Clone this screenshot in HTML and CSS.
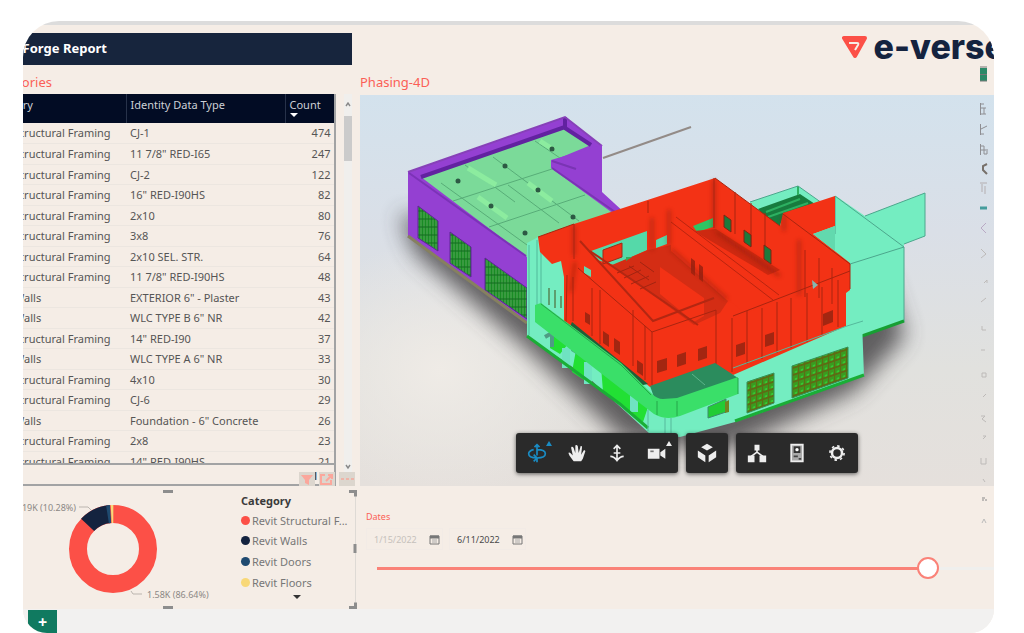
FILE: index.html
```html
<!DOCTYPE html>
<html lang="en">
<head>
  <meta charset="UTF-8" />
  <title>Forge Report</title>
  <link rel="stylesheet" href="styles.css">
</head>
<body>
  <main class="report">
    <div class="columns">
      <section class="left">
        <header class="banner"><h1>Forge Report</h1></header>
        <h2 class="title title-cut"><span>Categories</span></h2>

        <div class="table-area">
          <div class="table-box">
            <div class="table-clip">
              <table>
                <thead>
                  <tr><th class="cat">Category</th><th class="type">Identity Data Type</th><th class="count">Count<i></i></th></tr>
                </thead>
                <tbody>
                  <tr><td>Revit Structural Framing</td><td>CJ-1</td><td>474</td></tr>
                  <tr><td>Revit Structural Framing</td><td>11 7/8" RED-I65</td><td>247</td></tr>
                  <tr><td>Revit Structural Framing</td><td>CJ-2</td><td>122</td></tr>
                  <tr><td>Revit Structural Framing</td><td>16" RED-I90HS</td><td>82</td></tr>
                  <tr><td>Revit Structural Framing</td><td>2x10</td><td>80</td></tr>
                  <tr><td>Revit Structural Framing</td><td>3x8</td><td>76</td></tr>
                  <tr><td>Revit Structural Framing</td><td>2x10 SEL. STR.</td><td>64</td></tr>
                  <tr><td>Revit Structural Framing</td><td>11 7/8" RED-I90HS</td><td>48</td></tr>
                  <tr><td>Revit Walls</td><td>EXTERIOR 6" - Plaster</td><td>43</td></tr>
                  <tr><td>Revit Walls</td><td>WLC TYPE B 6" NR</td><td>42</td></tr>
                  <tr><td>Revit Structural Framing</td><td>14" RED-I90</td><td>37</td></tr>
                  <tr><td>Revit Walls</td><td>WLC TYPE A 6" NR</td><td>33</td></tr>
                  <tr><td>Revit Structural Framing</td><td>4x10</td><td>30</td></tr>
                  <tr><td>Revit Structural Framing</td><td>CJ-6</td><td>29</td></tr>
                  <tr><td>Revit Walls</td><td>Foundation - 6" Concrete</td><td>26</td></tr>
                  <tr><td>Revit Structural Framing</td><td>2x8</td><td>23</td></tr>
                  <tr><td>Revit Structural Framing</td><td>14" RED-I90HS</td><td>21</td></tr>
                </tbody>
              </table>
            </div>
            <div class="total">1</div>
          </div>
          <div class="scrollbar">
            <svg width="8" height="22" viewBox="0 0 8 22"><path d="M2 12l2-3 2 3" fill="none" stroke="#888" stroke-width="1.4"/></svg>
            <span class="thumb"></span>
            <svg width="8" height="14" viewBox="0 0 8 14"><path d="M2 5l2 3 2-3" fill="none" stroke="#888" stroke-width="1.4"/></svg>
          </div>
          <!-- visual header: filter, focus, more -->
          <svg class="visual-tools" width="58" height="15" viewBox="0 0 58 15">
            <g fill="#dcd6ce"><rect width="16" height="14"/><rect x="20" width="16" height="14"/><rect x="40" width="16" height="14"/></g>
            <path d="M2 3h12l-4 5v5l-4-2V8z" fill="#fba79c"/>
            <path d="M26 3h-4v9h10V8M27 9l6-6M29 3h4v4" fill="none" stroke="#fba79c" stroke-width="2"/>
            <path d="M42 7h3M47 7h3M52 7h3" stroke="#eeb4a8" stroke-width="2"/>
          </svg>
        </div>

        <div class="chart">
          <svg class="donut" width="218" height="118" viewBox="23 490 218 118">
            <g fill="none" stroke-width="18">
              <circle cx="113" cy="549" r="35" stroke="#fc5047"/>
              <path d="M87.600 524.920A35 35 0 0 1 109.900 514.140" stroke="#14233f"/>
              <path d="M107.500 514.430A35 35 0 0 1 110.560 514.090" stroke="#1f4a70"/>
              <path d="M111.200 514.050A35 35 0 0 1 113.300 514" stroke="#f8d878"/>
            </g>
            <path d="M79 507h9l3 3M131 591l2 3h9" fill="none" stroke="#bbb5af"/>
            <text x="76" y="511" text-anchor="end">0.19K (10.28%)</text>
            <text x="147" y="598">1.58K (86.64%)</text>
          </svg>
          <div class="legend">
            <h3>Category</h3>
            <ul>
              <li class="framing">Revit Structural F...</li>
              <li class="walls">Revit Walls</li>
              <li class="doors">Revit Doors</li>
              <li class="floors">Revit Floors</li>
            </ul>
            <i class="more"></i>
          </div>
          <!-- resize handles -->
          <svg class="handles" width="334" height="119" viewBox="23 490 334 119">
            <path d="M355.500 492v116" stroke="#dedad5"/>
            <g fill="none" stroke="#8d8d8d" stroke-width="3">
              <path d="M163 491.500h10M163 607.500h10M349 491.500h6.500v5M349 607.500h6.500v-5M355 544v9"/>
            </g>
          </svg>
        </div>
      </section>

      <section class="right">
        <div class="brand">
          <svg width="26" height="24" viewBox="0 0 26 24">
            <path d="M2 3h21l-10 18z" fill="#fc5047" stroke="#fc5047" stroke-width="4" stroke-linejoin="round"/>
            <path d="M7 8h8q2 0 1 2l-3 5" fill="none" stroke="#f5ede6" stroke-width="2"/>
            <path d="M12 10l-2 5-3-5z" fill="#fc5047"/>
          </svg>
          <span>e-verse</span>
        </div>
        <h2 class="title">Phasing-4D</h2>

        <div class="viewer">
          <svg class="scene" viewBox="360 95 634 391" preserveAspectRatio="xMidYMid slice">
            <defs>
              <linearGradient id="sky" x1="0" y1="0" x2="0" y2="1">
                <stop offset="0" stop-color="#d3e2ed"/>
                <stop offset=".35" stop-color="#dadfe7"/>
                <stop offset=".7" stop-color="#e1e1de"/>
                <stop offset="1" stop-color="#e5e0dc"/>
              </linearGradient>
              <radialGradient id="glow">
                <stop offset="0" stop-color="#efebe6"/>
                <stop offset="1" stop-color="#efebe6" stop-opacity="0"/>
              </radialGradient>
              <filter id="soft" x="-20%" y="-20%" width="140%" height="140%"><feGaussianBlur stdDeviation="11"/></filter>
              <filter id="shade" x="-20%" y="-20%" width="140%" height="140%"><feGaussianBlur stdDeviation="2"/></filter>
              <pattern id="panes" width="6" height="8" patternUnits="userSpaceOnUse">
                <rect width="6" height="8" fill="#198c24"/>
                <path d="M1 0v8M4 0v8" stroke="#58a85c"/>
                <path d="M0 3h6" stroke="#136a20"/>
              </pattern>
              <pattern id="louvres" width="6" height="7" patternUnits="userSpaceOnUse" patternTransform="skewY(-19)">
                <rect width="6" height="7" fill="#3b9a1f"/>
                <path d="M0 0v7M0 4h6" stroke="#5e6b14" stroke-width="2"/>
                <rect x="3" y="1" width="2" height="2" fill="#35d135"/>
              </pattern>
            </defs>

            <rect x="360" y="95" width="634" height="391" fill="url(#sky)"/>
            <ellipse cx="440" cy="370" rx="150" ry="130" fill="url(#glow)"/>
            <path d="M400 215l15 38 105 90 105 98 100 10 130-60 50-55-20-60z" fill="#48464a" opacity=".85" filter="url(#soft)"/>

            <!-- site boundary line -->
            <path d="M603 158l88-31" stroke="#938b87" stroke-width="2"/>

            <!-- purple wing -->
            <path d="M408 172l157-55 37 29v46l24 22-86 31-13 13v65l-119-87z" fill="#9440d2"/>
            <path d="M421 177l144-50 26 18-39 16v7l68 47-80 25-13 17z" fill="#7bda99"/>
            <path d="M421 177l144-50M565 117v11M565 128l26 17" fill="none" stroke="#6222a0" stroke-width="4"/>
            <path d="M408 172l157-55 37 29" fill="none" stroke="#8741b8" stroke-width="2"/>
            <path d="M551 160l51-15v50l20 16-8 3-63-46z" fill="#9440d2"/>
            <path d="M552 168l66 46M552 161l24 8" stroke="#7a34b4" stroke-width="2"/>
            <g stroke="#58ad78">
              <path d="M453 201l99-32M489 227l96-32M441 183l86 62M493 157l86 64M535 141l25 17M465 165l50 37M508 185l51 38"/>
            </g>
            <g stroke="#8cec9f" stroke-width="5"><path d="M468 168l28 17M478 197l29 21M528 183l24 18M540 141l14 9"/></g>
            <g fill="#2d5944">
              <circle cx="458" cy="181" r="2.500"/><circle cx="505" cy="166" r="2.500"/><circle cx="552" cy="149" r="2.500"/>
              <circle cx="491" cy="206" r="2.500"/><circle cx="538" cy="190" r="2.500"/><circle cx="573" cy="217" r="2.500"/><circle cx="525" cy="233" r="2.500"/>
            </g>
            <path d="M409 173l117 83" stroke="#7c32b8" stroke-width="2"/>
            <g fill="url(#panes)" stroke="#5e2596">
              <path d="M418 206l20 15v30l-20-13zM450 232l21 15v30l-21-14zM485 258l42 30v31l-42-29z"/>
            </g>
            <path d="M408 236l119 87" stroke="#86805f" stroke-width="3"/>

            <!-- teal rear block -->
            <path d="M750 202l48-16 28 20 10-10 29 20 60-23v43l-21 8v78l-43 14-90-60z" fill="#74edc1"/>
            <path d="M758 209l42-15 18 12-35 12-5 12z" fill="#177c3e"/>
            <path d="M766 212l34-13M768 217l40-14M798 186v9" stroke="#2db061" stroke-width="2"/>
            <g fill="none" stroke="#4ca68c">
              <path d="M835 196l69 51-54 17M865 216l60-23v43l-21 8M904 247v75M750 202l48-16 24 17M835 196v38"/>
            </g>
            <path d="M904 321l-42 15" stroke="#179f33" stroke-width="3"/>
            <path d="M855 290v30" stroke="#3fa688" stroke-width="6" filter="url(#shade)"/>

            <!-- teal main body -->
            <path d="M527 243l13-7 40 5 145 135 121-51 16-4 2 55-129 46-55 15-30-3-60-55-63-43z" fill="#74edc1"/>
            <path d="M537 240v68M541 243v66M529 245v90" stroke="#50b99a"/>
            <path d="M549 288v17M555 290v18M561 296v12" stroke="#5d9f70" stroke-width="2"/>

            <!-- red upper storey -->
            <path d="M538 237l36-13 141-46 65 48 3-13 52-17v30l-22 8 37 29v27l-4 3v33l-113 49-17-11-66 23-51-42-26-18h-9v-50l-3-16-9 3-12-12z" fill="#f33215"/>
            <path d="M591 251l56-20v19l-33 15-17-5zM656 240l11-5v9l-11 4z" fill="#55d9a9"/>
            <path d="M693 226l20-8v9l-16 5z" fill="#2fc464"/>
            <path d="M603 250l19-7v14l-19 7z" fill="#f33215" stroke="#9f2a18"/>
            <path d="M813 234l22-8v25zM584 266l7 4v7l-7-4z" fill="#62d9ae"/>
            <path d="M612 265l36-15 23-5v6l57 50-8 12-26 12-58-42z" fill="#d42d14"/>
            <path d="M632 257l-6 4v-4z" fill="#2fae5c"/>
            <path d="M694 231l22-2 64 41-12 5z" fill="#cd2911"/>
            <path d="M671 217l8 1 100 80-34 16-74-67z" fill="#f33215"/>
            <path d="M671 222l102 78M676 217l103 78" stroke="#b92510"/>
            <path d="M660 267l44 31v18l-10 6-34-28z" fill="#f33215"/>
            <path d="M691 258l4 3v15l-4-3zM699 264l4 3v15l-4-3z" fill="#a82411"/>
            <g fill="none" stroke="#7d1e10" stroke-width="3" opacity=".5" filter="url(#shade)">
              <path d="M714 180v49M652 218v32M669 210v36M716 232l64 44M574 226v30M784 215v16M799 240v55M671 249l56 50M575 262l-4 30"/>
            </g>
            <path d="M580 241l73 80 61-23" fill="none" stroke="#b32712" stroke-width="2"/>
            <path d="M590 251l108 74" stroke="#b32712" stroke-width="2"/>
            <path d="M617 273l17-7M624 278l17-8M631 284l18-8M640 289l16-7M629 266l20 14M640 262l14 10" stroke="#a32411"/>
            <g fill="none" stroke="#a92510">
              <path d="M574 224v35M538 237l36-13M648 201v12M715 178l65 48M714 178v50M751 203v43M765 213v41M735 192v42M783 214l67 50v25M805 250v47M819 258v40M832 268v36"/>
              <path d="M652 332l64-22M733 316l117-45M716 310v54M732 318v54M747 311v53M762 308v51M777 302v51M791 298v50M807 293v49M822 287v48M838 280v47M652 332v53M645 326v54M633 310v56M600 290v54M592 288v48M567 275l-1 47M573 277v44M578 268l74 64"/>
            </g>
            <g fill="#a32611">
              <path d="M657 361l10-3v12l-10 3zM677 355l9-3v12l-9 3zM698 349l9-3v12l-9 3zM736 345l9-3v12l-9 3zM765 335l9-3v12l-9 3zM823 314l10-4v12l-10 4zM603 331l6 4v12l-6-4zM614 338l6 4v13l-6-4zM585 312l5 3v10l-5-3zM637 360l6 4v12l-6-4z"/>
            </g>
            <path d="M724 215l7 5v12l-7-5zM744 230l7 5v12l-7-5zM764 245l7 5v14l-7-5z" fill="#1c7a3c" stroke="#7f2513"/>
            <path d="M812 280l6 5-5 4z" fill="#83b6b0"/>

            <!-- entrance canopy -->
            <path d="M572 322l76 62-10 2-70-54z" fill="#1f5f38"/>
            <path d="M650 386l65-23 23 15-61 24-22-2z" fill="#2b8c5d"/>
            <path d="M692 374l13 11" stroke="#5db48a"/>
            <path d="M550 332l18 12-8 10-10-6zM576 350l17 11-9 19-12-8zM601 366l48 38-6 18-40-30z" fill="#22e034"/>
            <path d="M545 337l7-4v14M572 349l16 10M601 366l14 10" fill="none" stroke="#4f9c84" stroke-width="4"/>
            <path d="M566 348v20M588 362v22M634 388v24" stroke="#6fe3c1" stroke-width="8"/>
            <path d="M535 305l6-2 80 60 30 30q6 6 12 6l14-1 61-21v17l-58 22q-14 5-26-2l-34-26-85-66z" fill="#3adf69"/>
            <path d="M541 304l80 61 30 30M657 401v14M677 401v15M738 378v16" fill="none" stroke="#25a64b"/>
            <path d="M708 407l18-8v13l-18 6z" fill="#22cc35" stroke="#3d8d6d"/>
            <path d="M725 402l4-2v12l-4 1z" fill="#718521"/>
            <path d="M527 336l93 68 28 24M735 421l129-46" fill="none" stroke="#1aae36" stroke-width="3"/>
            <path d="M648 410v21M665 418v18M671 418v18" stroke="#56b99c"/>

            <!-- garage openings -->
            <path d="M733 368l114-42 16-5" fill="none" stroke="#55b99c"/>
            <path d="M747 382l27-9v30l-27 10zM792 366l56-19v31l-56 20z" fill="url(#louvres)" stroke="#368f56"/>
          </svg>

          <div class="toolbar">
            <div class="group">
              <button class="active" aria-label="Orbit"><svg viewBox="0 0 24 24"><path d="M8 8c-4 1-6 3-6 5 0 3 4 5 10 5s10-2 10-5-4-5-10-5M12 2v13M9 5l3-3 3 3M12 18v5M8 14l4 4-4 4" fill="none" stroke="currentColor" stroke-width="2"/></svg><b></b></button>
              <button aria-label="Pan"><svg viewBox="0 0 24 24"><path d="M8 22c-2-3-5-6-6-9-.5-2 1-2 2-1l3 3L5 6c0-2 2-2 3 0l2 6V4c0-2 2-2 3 0l1 8 2-7c0-2 2-2 2 0l-1 9 3-5c1-1 2 0 2 1l-3 9-2 3z" fill="currentColor"/></svg></button>
              <button aria-label="Dolly"><svg viewBox="0 0 24 24"><path d="M12 4v16M8 7l4-4 4 4M4 16c3 0 6 2 8 5 2-3 5-5 8-5M8 12h8" fill="none" stroke="currentColor" stroke-width="2"/></svg></button>
              <button aria-label="Camera"><svg viewBox="0 0 24 24"><path d="M1 7h14v12H1zM16 11l6-4v12l-6-4z" fill="currentColor"/><path d="M4 10h4" stroke="#777" stroke-width="2"/></svg><b></b></button>
            </div>
            <div class="group">
              <button aria-label="Explode"><svg viewBox="0 0 24 24"><path d="M12 1l7 4-7 4-7-4zM1 9l9 6v8l-9-6zM23 9v8l-9 6v-8z" fill="currentColor"/></svg></button>
            </div>
            <div class="group">
              <button aria-label="Model browser"><svg viewBox="0 0 24 24"><path d="M9 2h6v7H9zM1 15h8v8H1zM15 15h8v8h-8z" fill="currentColor"/><path d="M12 8v3l-7 5M12 11l7 5" fill="none" stroke="currentColor" stroke-width="2"/></svg></button>
              <button aria-label="Properties"><svg viewBox="0 0 24 24"><path d="M5 2h14v20H5z" fill="#aaa" stroke="currentColor" stroke-width="2"/><path d="M8 4h8v8H8z" fill="#333"/><circle cx="12" cy="8" r="2" fill="#fff"/><path d="M8 16h5M14 19h3" stroke="#444" stroke-width="2"/></svg></button>
              <button aria-label="Settings"><svg viewBox="0 0 24 24"><circle cx="12" cy="12" r="6" fill="none" stroke="currentColor" stroke-width="3"/><circle cx="12" cy="12" r="8.500" fill="none" stroke="currentColor" stroke-width="2" stroke-dasharray="3 3.670"/></svg></button>
            </div>
          </div>
        </div>

        <div class="dates">
          <h3>Dates</h3>
          <div class="fields">
            <label class="start"><input type="text" value="1/15/2022" aria-label="Start date"><svg width="11" height="11" viewBox="0 0 11 11"><path d="M1 2h9v8H1z" fill="none" stroke="#777"/><path d="M1 3h9" stroke="#777" stroke-width="3"/><path d="M3 6h5M3 8h5" stroke="#aaa"/></svg></label>
            <label><input type="text" value="6/11/2022" aria-label="End date"><svg width="11" height="11" viewBox="0 0 11 11"><path d="M1 2h9v8H1z" fill="none" stroke="#777"/><path d="M1 3h9" stroke="#777" stroke-width="3"/><path d="M3 6h5M3 8h5" stroke="#aaa"/></svg></label>
          </div>
          <input class="slider" type="range" min="0" max="1000" value="907" aria-label="Date">
        </div>

        <!-- collapsed pane icons on the far edge -->
        <svg class="rail" width="10" height="465" viewBox="979 64 10 465">
          <path d="M980 68h7v6h-7zM980 75h7v6h-7z" fill="#2b8a68"/>
          <path d="M980 67h7M980 74.500h7M980 81h7" stroke="#777"/>
          <g fill="none" stroke="#8e8e92">
            <path d="M980.500 103v12M980 104h4M980 108h6M980 114h6M984 108v6M980.500 124v11M981 129l6-3M981 134h3M980.500 144v11M981 146h3v8h3v-5M981 150h5"/>
            <path d="M987 164l-4 2v4l4 4" stroke="#77706a" stroke-width="2"/>
            <path d="M980 183h7M982 184v8M985 186v8" stroke="#b4aeb0"/>
            <path d="M980 208h7" stroke="#459c9c" stroke-width="3"/>
            <path d="M986 223l-5 5 5 5" stroke="#b9a9c4"/>
            <path d="M981 249l5 5-5 4M984 283l3-3v3M986 298l-5 4M982 326v4h4M981 350h4M982 373h4v4h-4zM983 397l3-3M981 416h4l-3 3 4 3M983 436h3l-3 3M981 458v6h5v-6M983 479l2 3" stroke="#bdbab8"/>
            <path d="M982 498h3M982 500h2M985 500h2" stroke="#888"/>
            <path d="M982 523l2-4 2 4" stroke="#bbb"/>
          </g>
        </svg>
      </section>
    </div>
    <footer class="tabs"><button aria-label="New page">+</button></footer>
  </main>
</body>
</html>
```
FILE: styles.css
```css
* {
  box-sizing: border-box;
}
body {
  margin: 0;
  padding: 21px 30px 0 23px;
  background: #fff;
  color: #555;
  font-family: 'Noto Sans', 'Open Sans', sans-serif;
  font-size: 11px;
}
h1, h2, h3, ul {
  margin: 0;
  padding: 0;
}
button {
  border: none;
  padding: 0;
  cursor: pointer;
}
svg {
  display: block;
}
.report {
  padding-top: 4px;
  background: linear-gradient(#dcdcdc 4px, #f5ede6 4px);
  border-radius: 36px 36px 24px 24px;
  overflow: hidden;
}
.columns {
  display: grid;
  grid-template-columns: 337px minmax(0, 1fr);
}

/* left column */
.left {
  padding-top: 8px;
  min-width: 0;
}
.banner {
  width: 329px;
  height: 32px;
  background: #17253d;
}
.banner h1 {
  display: flex;
  justify-content: flex-end;
  width: 84px;
  line-height: 30px;
  font-size: 13px;
  color: #fff;
  white-space: nowrap;
}
.title {
  height: 29px;
  line-height: 34px;
  font-size: 13px;
  font-weight: normal;
  color: #fb5f56;
}
.title-cut {
  display: flex;
  justify-content: flex-end;
  width: 29px;
}
.table-area {
  position: relative;
  display: flex;
  gap: 8px;
  height: 393px;
}
.table-box {
  width: 313px;
}
.table-clip {
  height: 371px;
  overflow: hidden;
  border-right: 2px solid #a2a3a4;
  border-bottom: 2px solid #a2a3a4;
}
table {
  width: 312px;
  table-layout: fixed;
  border-collapse: collapse;
}
th {
  height: 29px;
  padding: 3px 4px;
  background: #020c24;
  color: #cdd0d6;
  font-weight: normal;
  line-height: 16px;
  text-align: left;
  vertical-align: top;
  border-right: 1px solid #27324a;
}
.cat {
  width: 103px;
}
.type {
  width: 159px;
}
th i {
  display: block;
  width: 0;
  border: 4px solid transparent;
  border-top-color: #fff;
  border-bottom: none;
}
td {
  height: 20px;
  padding: 1px 4px 0;
  line-height: 18px;
  white-space: nowrap;
  border-bottom: 1px solid #ece6e0;
}
tr:nth-child(even) td {
  height: 21px;
}
th:first-child, td:first-child {
  text-indent: -41px;
}
td:last-child {
  text-align: right;
}
.total {
  height: 21px;
  padding-right: 16px;
  border-right: 2px solid #a2a3a4;
  border-bottom: 2px solid #a2a3a4;
  line-height: 22px;
  font-weight: bold;
  text-align: right;
}
.scrollbar {
  display: flex;
  flex-direction: column;
  width: 8px;
  height: 380px;
  background: #f0efed;
}
.thumb {
  height: 45px;
  margin-bottom: auto;
  background: #cbcbcb;
}
.visual-tools {
  position: absolute;
  right: 3px;
  bottom: 0;
}

.chart {
  position: relative;
  display: flex;
  height: 122px;
  padding-top: 3px;
}
.donut text {
  font-size: 9px;
  fill: #8c8885;
}
.legend {
  padding-top: 2px;
}
.legend h3 {
  line-height: 18px;
  font-size: 11px;
  color: #3a3a3a;
}
.legend ul {
  list-style: none;
}
.legend li {
  display: flex;
  align-items: center;
  gap: 2px;
  height: 20px;
  color: #777;
  white-space: nowrap;
}
.legend li:nth-child(n+2) {
  height: 21px;
}
.legend li::before {
  content: '';
  width: 9px;
  height: 9px;
  border-radius: 50%;
  background: #fc5047;
}
.legend .walls::before {
  background: #14233f;
}
.legend .doors::before {
  background: #1f4a70;
}
.legend .floors::before {
  background: #f8d878;
}
.more {
  display: block;
  width: 0;
  margin: 2px 0 0 52px;
  border: 4px solid transparent;
  border-top-color: #333;
  border-bottom: none;
}
.handles {
  position: absolute;
  left: 0;
  top: 3px;
}

/* right column */
.right {
  position: relative;
  display: flex;
  flex-direction: column;
}
.brand {
  display: flex;
  justify-content: flex-end;
  gap: 6px;
  height: 40px;
  margin-right: -11px;
  padding-top: 10px;
}
.brand span {
  font-family: Inter, sans-serif;
  font-size: 34px;
  font-weight: 800;
  line-height: 24px;
  color: #14233f;
}
.title + .viewer {
  margin-top: 1px;
}
.viewer {
  position: relative;
}
.scene {
  width: 100%;
  height: 391px;
}
.toolbar {
  position: absolute;
  left: 156px;
  bottom: 13px;
  display: flex;
  gap: 8px;
}
.group {
  display: flex;
  padding: 0 1px;
  border-radius: 3px;
  background: #2a2a2a;
  box-shadow: 0 1px 4px rgba(0, 0, 0, .6);
}
.toolbar button {
  position: relative;
  display: flex;
  align-items: center;
  justify-content: center;
  width: 40px;
  height: 40px;
  background: none;
  color: #eee;
}
.toolbar button svg {
  width: 20px;
  height: 20px;
}
.toolbar .active {
  color: #1a8cc4;
}
.toolbar b {
  position: absolute;
  top: 8px;
  right: 5px;
  border: 3px solid transparent;
  border-bottom: 5px solid currentColor;
  border-top: none;
}

.dates {
  padding: 22px 0 0 6px;
}
.dates h3 {
  height: 20px;
  line-height: 18px;
  font-size: 9px;
  font-weight: normal;
  color: #fb5f56;
}
.fields {
  display: flex;
  gap: 6px;
}
.fields label {
  display: flex;
  align-items: center;
  width: 77px;
  height: 22px;
  padding: 0 2px 0 7px;
  border: 1px solid #f2ebe6;
}
.fields input {
  flex: 1;
  min-width: 0;
  padding: 0;
  border: none;
  background: none;
  font: 9px 'Noto Sans', sans-serif;
  color: #4a4a4a;
}
.fields .start input {
  color: #c6c1bc;
}
.slider {
  display: block;
  appearance: none;
  width: calc(100% - 11px);
  height: 22px;
  margin: 7px 0 0 11px;
  background: linear-gradient(to right, #fa8278 90%, #efefed 90%) center / 100% 3px no-repeat;
}
.slider::-webkit-slider-thumb {
  appearance: none;
  width: 22px;
  height: 22px;
  border: 2px solid #fa8278;
  border-radius: 50%;
  background: #fff;
}
.rail {
  position: absolute;
  top: 39px;
  right: 5px;
}

.tabs {
  height: 24px;
  padding: 1px 5px 0;
  background: #f2f1f0;
}
.tabs button {
  width: 29px;
  height: 23px;
  background: #107a60;
  color: #fff;
  font: bold 16px 'Noto Sans', sans-serif;
}
```
